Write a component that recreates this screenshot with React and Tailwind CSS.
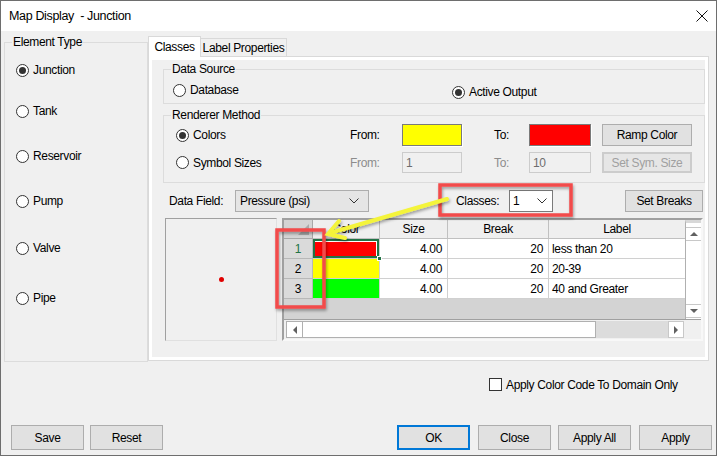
import React from 'react';

const rows = [
  { color: '#ff0000', size: '4.00', brk: '20', label: 'less than 20', selected: true },
  { color: '#ffff00', size: '4.00', brk: '20', label: '20-39' },
  { color: '#00ff00', size: '4.00', brk: '20', label: '40 and Greater' },
];

const elementTypes = [
  { label: 'Junction', mt: 'mt-[14px]', checked: true },
  { label: 'Tank', mt: 'mt-[27px]' },
  { label: 'Reservoir', mt: 'mt-[31px]' },
  { label: 'Pump', mt: 'mt-[31px]' },
  { label: 'Valve', mt: 'mt-[33px]' },
  { label: 'Pipe', mt: 'mt-[36px]' },
];

function Radio({ checked, label, className = '' }) {
  return (
    <div className={`flex items-center h-[14px] gap-[4px] ${className}`}>
      <span className="w-[13px] h-[13px] rounded-full border border-[#333333] bg-white flex items-center justify-center shrink-0">
        {checked && <span className="w-[7px] h-[7px] rounded-full bg-[#333333]" />}
      </span>
      <span className="leading-[14px] whitespace-nowrap">{label}</span>
    </div>
  );
}

// group box with the caption sitting on the top border
function Group({ label, className = '', children }) {
  return (
    <div className={`border border-[#dcdcdc] ${className}`}>
      <div className="-mt-[8px] ml-[7px] px-[1px] w-fit bg-[#f0f0f0] leading-[14px] whitespace-nowrap">{label}</div>
      {children}
    </div>
  );
}

function Button({ children, className = '' }) {
  return (
    <div className={`h-[25px] border border-[#adadad] bg-[#e1e1e1] flex items-center justify-center whitespace-nowrap ${className}`}>
      {children}
    </div>
  );
}

function Chevron() {
  return (
    <svg width="10" height="6" viewBox="0 0 10 6">
      <path d="M0.5 0.5 L5 5 L9.5 0.5" stroke="#333" strokeWidth="1" fill="none" />
    </svg>
  );
}

function Tri({ dir }) {
  const d = {
    left: 'M1 4 L5 0 L5 8 Z',
    right: 'M5 4 L1 0 L1 8 Z',
    up: 'M0 5 L4 1 L8 5 Z',
    down: 'M0 1 L4 5 L8 1 Z',
  }[dir];
  const w = dir === 'left' || dir === 'right' ? 6 : 8;
  const h = dir === 'left' || dir === 'right' ? 8 : 6;
  return (
    <svg width={w} height={h} viewBox={`0 0 ${w} ${h}`}>
      <path d={d} fill="#606060" />
    </svg>
  );
}

function ClassGrid() {
  return (
    <div className="w-[421px] h-[123px] border-2 border-t-[#a0a0a0] border-l-[#a0a0a0] border-r-[#f8f8f8] border-b-[#f8f8f8] flex flex-col bg-[#f0f0f0]">
      <div className="flex h-[99px]">
        <div className="w-[401px] flex flex-col bg-[#d3d3d3]">
          <div className="flex h-[19px] shrink-0">
            <div className="w-[29px] relative bg-[#d4d4d4] border-r border-b border-[#a8a8a8]">
              <svg className="absolute right-[3px] bottom-[3px]" width="11" height="11" viewBox="0 0 11 11">
                <path d="M11 0 L11 11 L0 11 Z" fill="#a9a9a9" />
              </svg>
            </div>
            <div className="w-[67px] bg-[#efefef] border-r border-b border-[#c0c0c0] flex items-center justify-center">Color</div>
            <div className="w-[68px] bg-[#efefef] border-r border-b border-[#c0c0c0] flex items-center justify-center">Size</div>
            <div className="w-[101px] bg-[#efefef] border-r border-b border-[#c0c0c0] flex items-center justify-center">Break</div>
            <div className="w-[136px] bg-[#efefef] border-b border-[#c0c0c0] flex items-center justify-center">Label</div>
          </div>
          {rows.map((r, i) => (
            <div key={i} className="flex h-[20px] shrink-0">
              <div className={`w-[29px] bg-[#dadada] border-r border-b border-[#b8b8b8] flex items-center justify-center ${r.selected ? 'text-[#217346]' : ''}`}>
                {i + 1}
              </div>
              {r.selected ? (
                <div className="w-[67px] relative border-r border-b border-[#d0d0d0] bg-white">
                  <div className="absolute inset-0 border-2 border-[#217346]">
                    <div className="h-full bg-[#ff0000] border-t border-r border-white" />
                  </div>
                  <div className="absolute right-[-3px] bottom-[-3px] w-[5px] h-[5px] bg-[#217346] border border-white" />
                </div>
              ) : (
                <div className={`w-[67px] border-r border-b border-[#d0d0d0] ${i === 1 ? 'bg-[#ffff00]' : 'bg-[#00ff00]'}`} />
              )}
              <div className="w-[68px] bg-white border-r border-b border-[#d0d0d0] flex items-center justify-end pr-[5px]">{r.size}</div>
              <div className="w-[101px] bg-white border-r border-b border-[#d0d0d0] flex items-center justify-end pr-[5px]">{r.brk}</div>
              <div className="w-[136px] bg-white border-b border-[#d0d0d0] flex items-center pl-[3px]">{r.label}</div>
            </div>
          ))}
          <div className="flex-1 bg-[#d3d3d3]" />
        </div>
        <div className="w-[16px] flex flex-col bg-white border-l border-[#b0b0b0] pt-[4px] border-t-[3px] border-t-[#d8d8d8]">
          <div className="h-[14px] border-y border-[#c8c8c8] bg-white flex items-center justify-center">
            <Tri dir="up" />
          </div>
          <div className="flex-1 bg-white" />
          <div className="h-[14px] border-y border-[#c8c8c8] bg-white flex items-center justify-center mb-[1px]">
            <Tri dir="down" />
          </div>
        </div>
      </div>
      <div className="h-[20px] flex items-stretch border-t border-[#a0a0a0] py-[1px] pl-[2px] bg-[#f0f0f0]">
        <div className="w-[17px] bg-white border border-[#b0b0b0] flex items-center justify-center">
          <Tri dir="left" />
        </div>
        <div className="w-[293px] bg-white border-y border-r border-[#b0b0b0]" />
        <div className="w-[72px] bg-[#dcdcdc]" />
        <div className="w-[16px] bg-white border border-[#c8c8c8] flex items-center justify-center">
          <Tri dir="right" />
        </div>
        <div className="w-[17px] bg-[#f0f0f0]" />
      </div>
    </div>
  );
}

export default function App() {
  return (
    <div className="relative w-[717px] h-[456px] bg-[#f0f0f0] border border-[#6e6e6e] flex flex-col text-[12px] tracking-[-0.35px] text-black font-['Liberation_Sans',Arial,sans-serif] overflow-hidden">
      {/* title bar */}
      <div className="h-[30px] shrink-0 bg-white flex items-center justify-between pl-[8px] pr-[8px]">
        <span className="whitespace-pre text-[12.5px]">Map Display  - Junction</span>
        <svg width="12" height="12" viewBox="0 0 12 12">
          <path d="M0.5 0.5 L11.5 11.5 M11.5 0.5 L0.5 11.5" stroke="#111" strokeWidth="1" />
        </svg>
      </div>

      <div className="flex items-start">
        <Group label="Element Type" className="mt-[11px] ml-[3px] w-[144px] h-[320px]">
          <div className="flex flex-col pl-[11px]">
            {elementTypes.map((t) => (
              <Radio key={t.label} label={t.label} checked={t.checked} className={t.mt} />
            ))}
          </div>
        </Group>

        <div className="mt-[5px] w-[561px] flex flex-col">
          <div className="flex items-end h-[20px]">
            <div className="w-[53px] h-[21px] -mb-[1px] relative z-10 bg-white border border-b-0 border-[#d9d9d9] flex items-center justify-center">
              Classes
            </div>
            <div className="w-[86px] h-[18px] bg-[#f0f0f0] border border-l-0 border-b-0 border-[#d9d9d9] flex items-center justify-center whitespace-nowrap">
              Label Properties
            </div>
          </div>
          <div className="h-[305px] border border-[#d9d9d9] bg-white p-[3px]">
            <div className="h-full bg-[#f0f0f0] flex flex-col">
              <Group label="Data Source" className="mt-[9px] ml-[11px] w-[542px] h-[35px]">
                <div className="flex items-start mt-[7px] pl-[9px]">
                  <div className="w-[279px]">
                    <Radio label="Database" />
                  </div>
                  <Radio label="Active Output" checked className="mt-[2px]" />
                </div>
              </Group>

              <Group label="Renderer Method" className="mt-[11px] ml-[11px] w-[542px] h-[68px]">
                <div className="flex items-center h-[22px] mt-[2px] pl-[12px]">
                  <div className="w-[174px]">
                    <Radio label="Colors" checked />
                  </div>
                  <div className="w-[52px]">From:</div>
                  <div className="w-[60px] h-[22px] bg-[#ffff00] border border-[#7a7a7a] shadow-[1px_1px_0_#ffffff]" />
                  <div className="w-[32px]" />
                  <div className="w-[35px]">To:</div>
                  <div className="w-[62px] h-[22px] bg-[#ff0000] border border-[#7a7a7a] shadow-[1px_1px_0_#ffffff]" />
                  <div className="w-[11px]" />
                  <Button className="w-[90px] !h-[22px]">Ramp Color</Button>
                </div>
                <div className="flex items-center h-[21px] mt-[6px] pl-[12px]">
                  <div className="w-[174px]">
                    <Radio label="Symbol Sizes" />
                  </div>
                  <div className="w-[52px] text-[#8c8c8c]">From:</div>
                  <div className="w-[60px] h-[21px] border border-[#cccccc] bg-[#f0f0f0] flex items-center pl-[3px] text-[#6d6d6d]">1</div>
                  <div className="w-[32px]" />
                  <div className="w-[35px] text-[#8c8c8c]">To:</div>
                  <div className="w-[62px] h-[21px] border border-[#cccccc] bg-[#f0f0f0] flex items-center pl-[3px] text-[#6d6d6d]">10</div>
                  <div className="w-[11px]" />
                  <div className="w-[90px] h-[21px] border-2 border-[#cccccc] bg-[#e6e6e6] flex items-center justify-center text-[#a0a0a0] whitespace-nowrap">
                    Set Sym. Size
                  </div>
                </div>
              </Group>

              <div className="flex items-center h-[22px] mt-[7px] pl-[17px]">
                <div className="w-[66px]">Data Field:</div>
                <div className="w-[134px] h-[22px] bg-[#e5e5e5] border border-[#adadad] flex items-center justify-between pl-[4px] pr-[9px]">
                  <span>Pressure (psi)</span>
                  <Chevron />
                </div>
                <div className="w-[87px]" />
                <div className="w-[53px]">Classes:</div>
                <div className="w-[44px] h-[22px] bg-white border border-[#7a7a7a] flex items-center justify-between pl-[3px] pr-[5px]">
                  <span>1</span>
                  <Chevron />
                </div>
                <div className="w-[72px]" />
                <Button className="w-[78px] !h-[22px]">Set Breaks</Button>
              </div>

              <div className="flex mt-[6px] pl-[13px] gap-[5px]">
                <div className="w-[112px] h-[123px] border border-t-[#a0a0a0] border-l-[#a0a0a0] border-r-[#e0e0e0] border-b-[#e0e0e0] bg-[#f0f0f0] flex items-center justify-center">
                  <div className="w-[5px] h-[5px] rounded-full bg-[#e00000]" />
                </div>
                <ClassGrid />
              </div>
            </div>
          </div>
        </div>
      </div>

      <div className="flex items-center h-[13px] mt-[16px] pl-[488px]">
        <span className="w-[13px] h-[13px] border border-[#333333] bg-white shrink-0" />
        <span className="ml-[4px] whitespace-nowrap">Apply Color Code To Domain Only</span>
      </div>

      <div className="flex mt-[34px] pl-[10px]">
        <Button className="w-[73px]">Save</Button>
        <Button className="w-[73px] ml-[6px]">Reset</Button>
        <Button className="w-[73px] ml-[234px] !border-2 !border-[#0078d7]">OK</Button>
        <Button className="w-[73px] ml-[8px]">Close</Button>
        <Button className="w-[73px] ml-[7px]">Apply All</Button>
        <Button className="w-[73px] ml-[8px]">Apply</Button>
      </div>

      {/* screenshot annotations drawn over the dialog */}
      <svg className="absolute left-[-1px] top-[-1px] pointer-events-none" width="717" height="456" viewBox="0 0 717 456">
        <defs>
          <filter id="sh" x="-20%" y="-20%" width="140%" height="140%">
            <feDropShadow dx="1" dy="2" stdDeviation="1.5" floodColor="#000" floodOpacity="0.35" />
          </filter>
        </defs>
        <rect x="440" y="185" width="131" height="30" fill="none" stroke="#f24b4b" strokeWidth="3.5" filter="url(#sh)" />
        <rect x="277" y="230" width="47" height="77" fill="none" stroke="#f24b4b" strokeWidth="3.5" filter="url(#sh)" />
        <g filter="url(#sh)" stroke="#f4f43a" strokeWidth="4" fill="none" strokeLinecap="round" strokeLinejoin="miter">
          <path d="M447 199 L330 233" />
          <path d="M339 221 L328 234 L345 238" />
        </g>
      </svg>
    </div>
  );
}
